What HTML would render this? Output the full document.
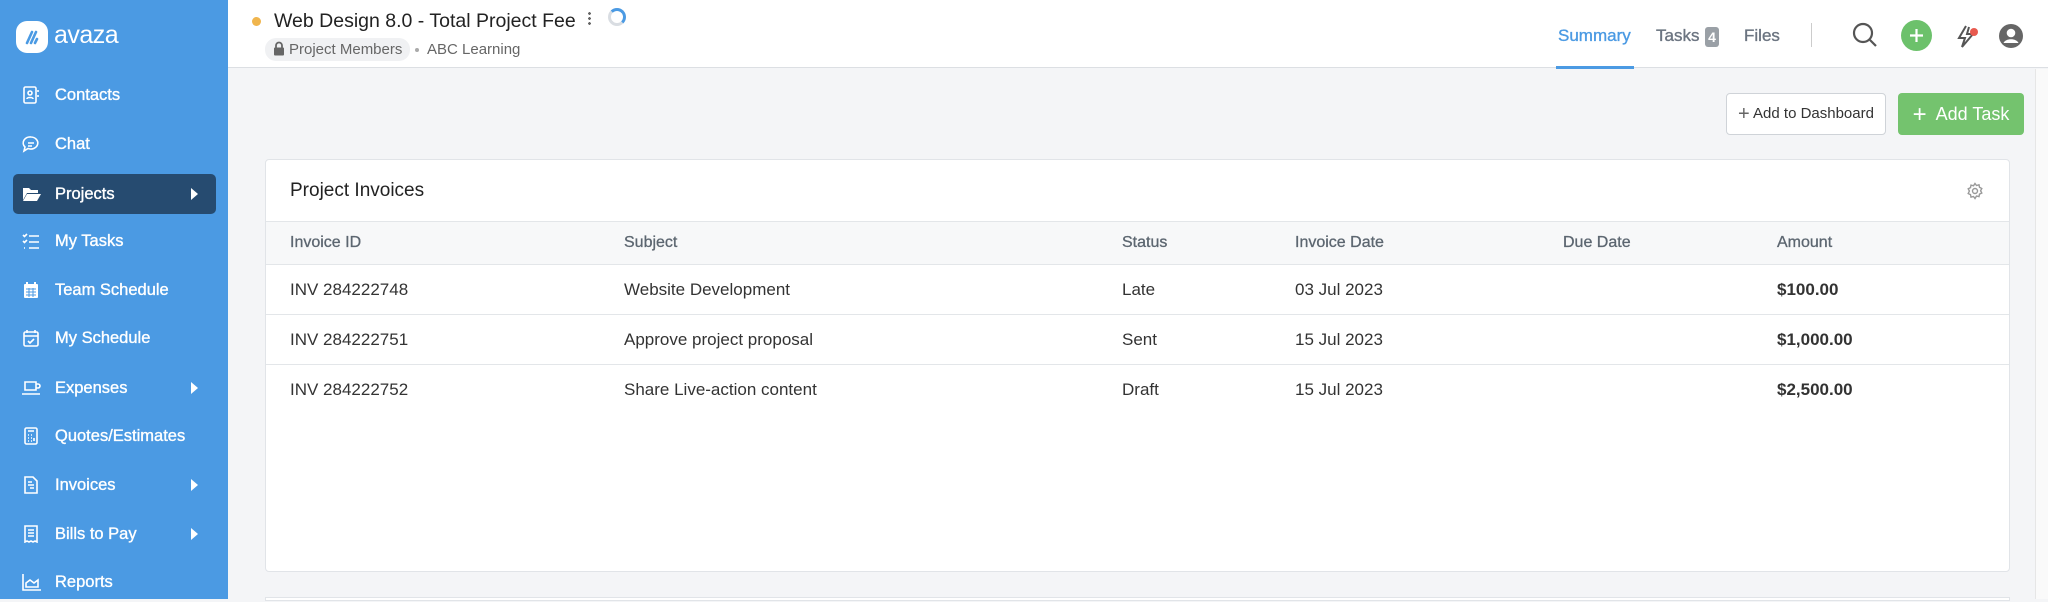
<!DOCTYPE html>
<html><head><meta charset="utf-8"><style>
*{box-sizing:border-box;margin:0;padding:0}
body{width:2048px;height:599px;overflow:hidden;font-family:"Liberation Sans",sans-serif;background:#f4f5f7;position:relative;color:#2b2b2b}
.sb{position:absolute;left:0;top:0;width:228px;height:599px;background:#4b9ae3}
.logo{position:absolute;left:16px;top:21px;width:32px;height:32px;background:#fff;border-radius:11px}
.logotxt{position:absolute;left:54px;top:21px;color:#fff;font-size:25px;letter-spacing:-0.5px}
.it{position:absolute;left:0;width:228px;height:40px;color:#fff;font-size:16.5px;line-height:40px;-webkit-text-stroke:0.35px #fff}
.it span{position:absolute;left:55px}
.it svg{position:absolute;left:22px;top:11px}
.it .ar{position:absolute;left:191px;top:14px;width:0;height:0;border-left:7px solid #fff;border-top:6px solid transparent;border-bottom:6px solid transparent}
.act{left:13px;width:203px;background:#264b70;border-radius:5px}
.act span{left:42px}.act svg{left:9px}.act .ar{left:178px}
.hd{position:absolute;left:228px;top:0;right:0;height:68px;background:#fff;border-bottom:1px solid #dcdfe3}
.abs{position:absolute}
.card{position:absolute;left:265px;top:159px;width:1745px;height:413px;background:#fff;border:1px solid #e1e4e8;border-radius:4px}
.th{position:absolute;left:0;right:0;top:61px;height:44px;background:#f7f8f9;border-top:1px solid #e3e6e9;border-bottom:1px solid #e3e6e9;color:#5c6670;font-size:16px;-webkit-text-stroke:0.3px #5c6670}
.row{position:absolute;left:0;right:0;height:50px;border-bottom:1px solid #e3e6e9;font-size:17px;color:#333}
.c{position:absolute;top:50%;transform:translateY(-50%);white-space:nowrap}
.tab{position:absolute;top:26px;font-size:17px;color:#6b7480;-webkit-text-stroke:0.35px #6b7480}
</style></head><body>
<div class="sb">
 <div class="logo"><svg width="32" height="32" viewBox="0 0 32 32"><path d="M11 22l5-11M15 22l5-11M19 22l2-4" stroke="#4b9ae3" stroke-width="2.6" stroke-linecap="round"/></svg></div>
 <div class="logotxt">avaza</div>
 <div class="it" style="top:75px"><svg width="18" height="18" viewBox="0 0 18 18" fill="none" stroke="#fff" stroke-width="1.6"><rect x="2" y="1" width="12" height="16" rx="1.5"/><circle cx="8" cy="7" r="2"/><path d="M5 13c0-2 6-2 6 0M16 4v2M16 9v2"/></svg><span>Contacts</span></div>
 <div class="it" style="top:124px"><svg width="18" height="18" viewBox="0 0 18 18" fill="none" stroke="#fff" stroke-width="1.6"><path d="M9 2a7 6 0 1 1-3 11.5L2 16l1-4A7 6 0 0 1 9 2z"/><path d="M6 8h6M6 11h4"/></svg><span>Chat</span></div>
 <div class="it act" style="top:174px"><svg width="20" height="18" viewBox="0 0 20 18" fill="#fff"><path d="M1 3h6l2 2h7v3H5L1 15z"/><path d="M5 9h14l-4 7H1z"/></svg><span>Projects</span><i class="ar"></i></div>
 <div class="it" style="top:221px"><svg width="18" height="18" viewBox="0 0 18 18" fill="none" stroke="#fff" stroke-width="1.6"><path d="M1 3l1.5 1.5L5 2M1 9l1.5 1.5L5 8M7 4h10M7 10h10M2 16h1M7 16h10"/></svg><span>My Tasks</span></div>
 <div class="it" style="top:270px"><svg width="18" height="18" viewBox="0 0 18 18" fill="#fff"><rect x="2" y="3" width="14" height="14" rx="1"/><path d="M5 1v3M13 1v3" stroke="#fff" stroke-width="2"/><path d="M4 8h10M4 11h10M4 14h10M7 7v9M11 7v9" stroke="#4b9ae3" stroke-width="1"/></svg><span>Team Schedule</span></div>
 <div class="it" style="top:318px"><svg width="18" height="18" viewBox="0 0 18 18" fill="none" stroke="#fff" stroke-width="1.6"><rect x="2" y="3" width="14" height="14" rx="1.5"/><path d="M5 1v3M13 1v3M2 7h14M6 12l2 2 4-4"/></svg><span>My Schedule</span></div>
 <div class="it" style="top:368px"><svg width="20" height="18" viewBox="0 0 20 18" fill="none" stroke="#fff" stroke-width="1.6"><path d="M3 3h11v8H3zM14 5h2a2 2 0 0 1 0 4h-2M0 15h18"/></svg><span>Expenses</span><i class="ar"></i></div>
 <div class="it" style="top:416px"><svg width="18" height="18" viewBox="0 0 18 18" fill="none" stroke="#fff" stroke-width="1.6"><rect x="3" y="1" width="12" height="16" rx="1.5"/><path d="M6 4h6M6 8h1M9 8h1M6 11h1M9 11h1M6 14h1M9 14h1M12 11v3"/></svg><span>Quotes/Estimates</span></div>
 <div class="it" style="top:465px"><svg width="18" height="18" viewBox="0 0 18 18" fill="none" stroke="#fff" stroke-width="1.6"><path d="M3 1h8l4 4v12H3z"/><path d="M6 6h4M6 9h6M8 12h4" /></svg><span>Invoices</span><i class="ar"></i></div>
 <div class="it" style="top:514px"><svg width="18" height="18" viewBox="0 0 18 18" fill="none" stroke="#fff" stroke-width="1.6"><path d="M3 1h12v16l-2-1-2 1-2-1-2 1-2-1-2 1z"/><path d="M6 5h6M6 8h6M6 11h6"/></svg><span>Bills to Pay</span><i class="ar"></i></div>
 <div class="it" style="top:562px"><svg width="20" height="18" viewBox="0 0 20 18" fill="none" stroke="#fff" stroke-width="1.6"><path d="M1 1v16h18M4 14v-4l4-3 4 3 4-3v7z"/></svg><span>Reports</span></div>
</div>
<div class="hd">
 <div class="abs" style="left:24px;top:17px;width:9px;height:9px;border-radius:50%;background:#f0b54d"></div>
 <div class="abs" style="left:46px;top:10px;font-size:19.5px;color:#222">Web Design 8.0 - Total Project Fee</div>
 <div class="abs" style="left:360px;top:11px;width:3px;height:15px;background:radial-gradient(circle,#666 1.3px,transparent 1.5px) 0 0/3px 5px"></div>
 <div class="abs" style="left:380px;top:8px;width:18px;height:18px;border-radius:50%;border:3px solid #d9dde2;border-top-color:#4b9ae3;border-right-color:#4b9ae3"></div>
 <div class="abs" style="left:37px;top:38px;height:23px;width:145px;background:#f0f1f3;border-radius:11px"></div>
 <svg class="abs" style="left:45px;top:41px" width="12" height="15" viewBox="0 0 12 15"><path d="M3 7V4.5a3 3 0 0 1 6 0V7" stroke="#666" stroke-width="1.8" fill="none"/><rect x="1" y="6.5" width="10" height="8" rx="1" fill="#666"/></svg>
 <div class="abs" style="left:61px;top:41px;font-size:15px;color:#666">Project Members</div>
 <div class="abs" style="left:187px;top:48px;width:4px;height:4px;border-radius:50%;background:#aaa"></div>
 <div class="abs" style="left:199px;top:41px;font-size:15px;color:#666">ABC Learning</div>
 <div class="tab" style="left:1330px;color:#4b9ae3;-webkit-text-stroke:0.35px #4b9ae3">Summary</div>
 <div class="abs" style="left:1328px;top:66px;width:78px;height:3px;background:#4b9ae3"></div>
 <div class="tab" style="left:1428px">Tasks</div>
 <div class="abs" style="left:1477px;top:27px;width:14px;height:20px;background:#9aa0a6;border-radius:3px;color:#fff;font-size:14px;text-align:center;line-height:20px;font-weight:bold">4</div>
 <div class="tab" style="left:1516px">Files</div>
 <div class="abs" style="left:1583px;top:23px;width:1px;height:24px;background:#ccc"></div>
 <svg class="abs" style="left:1623px;top:21px" width="28" height="28" viewBox="0 0 28 28" fill="none" stroke="#555" stroke-width="2.2"><circle cx="12" cy="12" r="9"/><path d="M19 19l6 6"/></svg>
 <div class="abs" style="left:1673px;top:20px;width:31px;height:31px;border-radius:50%;background:#6cc16b"></div>
 <svg class="abs" style="left:1680px;top:27px" width="17" height="17"><path d="M8.5 2v13M2 8.5h13" stroke="#fff" stroke-width="2.2"/></svg>
 <svg class="abs" style="left:1726px;top:22px" width="28" height="28" viewBox="0 0 28 28" fill="none" stroke="#555" stroke-width="2"><path d="M12 4L5 16h6l-3 9 11-13h-6l2-7"/><circle cx="20" cy="10" r="4" fill="#e85a4f" stroke="none"/></svg>
 <svg class="abs" style="left:1770px;top:23px" width="26" height="26" viewBox="0 0 26 26"><circle cx="13" cy="13" r="12" fill="#666"/><circle cx="13" cy="10" r="4.3" fill="#fff"/><path d="M5.5 20c2-5 13-5 15 0" fill="#fff"/></svg>
</div>
<div class="abs" style="left:2035px;top:69px;width:13px;height:530px;background:#fafafa;border-left:1px solid #e6e6e6"></div>
<div class="abs" style="left:1726px;top:93px;width:160px;height:42px;background:#fff;border:1px solid #cfd3d8;border-radius:4px;font-size:15px;line-height:40px;text-align:center;color:#333"><span style="font-size:20px;color:#666;vertical-align:-2px">+</span> Add to Dashboard</div>
<div class="abs" style="left:1898px;top:93px;width:126px;height:42px;background:#74c36e;border-radius:4px;font-size:18px;line-height:42px;text-align:center;color:#fff"><span style="font-size:24px;vertical-align:-2px">+</span>&nbsp; Add Task</div>
<div class="card">
 <div class="abs" style="left:24px;top:20px;font-size:19px;color:#222">Project Invoices</div>
 <svg class="abs" style="left:1700px;top:22px" width="18" height="18" viewBox="0 0 18 18" fill="none" stroke="#999" stroke-width="1.4"><circle cx="9" cy="9" r="2.5"/><path d="M9 1.5l1.5 2 2.5-.7.5 2.5 2.3 1.2-1.2 2.2 1.2 2.3-2.3 1.1-.5 2.5-2.5-.6L9 16.5l-1.5-2-2.5.6-.5-2.5-2.3-1.1L3.4 9 2.2 6.8l2.3-1.2.5-2.5 2.5.7z"/></svg>
 <div class="th"><div class="c" style="left:24px">Invoice ID</div><div class="c" style="left:358px">Subject</div><div class="c" style="left:856px">Status</div><div class="c" style="left:1029px">Invoice Date</div><div class="c" style="left:1297px">Due Date</div><div class="c" style="left:1511px">Amount</div></div>
 <div class="row" style="top:105px"><div class="c" style="left:24px">INV 284222748</div><div class="c" style="left:358px">Website Development</div><div class="c" style="left:856px">Late</div><div class="c" style="left:1029px">03 Jul 2023</div><div class="c" style="left:1511px;font-weight:bold">$100.00</div></div>
 <div class="row" style="top:155px"><div class="c" style="left:24px">INV 284222751</div><div class="c" style="left:358px">Approve project proposal</div><div class="c" style="left:856px">Sent</div><div class="c" style="left:1029px">15 Jul 2023</div><div class="c" style="left:1511px;font-weight:bold">$1,000.00</div></div>
 <div class="row" style="top:205px;border-bottom:none"><div class="c" style="left:24px">INV 284222752</div><div class="c" style="left:358px">Share Live-action content</div><div class="c" style="left:856px">Draft</div><div class="c" style="left:1029px">15 Jul 2023</div><div class="c" style="left:1511px;font-weight:bold">$2,500.00</div></div>
</div>
<div class="abs" style="left:265px;top:597px;width:1745px;height:4px;background:#fff;border:1px solid #e1e4e8"></div>
</body></html>
